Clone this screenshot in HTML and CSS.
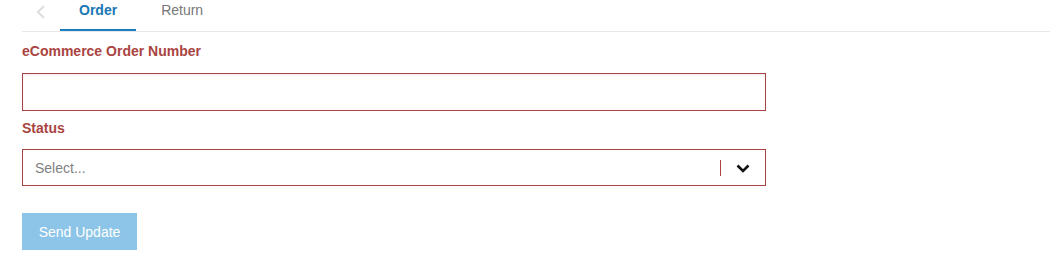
FILE: index.html
```html
<!DOCTYPE html>
<html lang="en">
<head>
    <meta charset="UTF-8">
    <title>Order Update</title>
    <link rel="stylesheet" href="styles.css">
</head>
<body>

<div class="update-panel">
    <nav class="tabs">
        <button class="tab-back" aria-label="Back">
            <svg width="10" height="16" viewBox="0 0 10 16"><path d="M8 2 L2 8 L8 14" fill="none" stroke="#ddd" stroke-width="2"/></svg>
        </button>
        <a class="tab active" href="#">Order</a>
        <a class="tab" href="#">Return</a>
    </nav>

    <form class="update-form">
        <label class="field-label" for="order-number">eCommerce Order Number</label>
        <input id="order-number" class="text-input" type="text">

        <label class="field-label status-label">Status</label>
        <div class="select-box">
            <span class="select-placeholder">Select...</span>
            <span class="select-sep"></span>
            <span class="select-arrow">
                <svg width="14" height="9" viewBox="0 0 14 9"><path d="M1.5 1.5 L7 7 L12.5 1.5" fill="none" stroke="#111" stroke-width="2.6"/></svg>
            </span>
        </div>

        <button class="send-btn" type="button" disabled>Send Update</button>
    </form>
</div>

</body>
</html>
```

FILE: styles.css
```css
body {
    font-family: "Liberation Sans", Arial, sans-serif;
    background: #fff;
    margin: 0;
    padding: 0;
}

.tabs {
    display: flex;
    align-items: flex-start;
    margin-left: 22px;
    height: 31px;
    border-bottom: 1px solid #e8e8e8;
}

.tab-back {
    background: none;
    border: none;
    padding: 0;
    width: 38px;
    height: 29px;
    display: flex;
    align-items: flex-start;
    padding-top: 4px;
    padding-left: 14px;
    box-sizing: border-box;
}

.tab {
    font-size: 14px;
    line-height: 20px;
    padding: 0 19px 9px;
    color: #777;
    text-decoration: none;
    margin-right: 6px;
}

.tab.active {
    color: #1a78b5;
    font-weight: bold;
    border-bottom: 2px solid #1a7fc1;
}

.update-form {
    padding-left: 22px;
    width: 744px;
    display: flex;
    flex-direction: column;
    align-items: flex-start;
}

.field-label {
    font-size: 14px;
    font-weight: bold;
    line-height: 18px;
    color: #a94442;
    margin-top: 10px;
    margin-bottom: 13px;
}

.status-label {
    margin-top: 8px;
    margin-bottom: 12px;
}

.text-input {
    width: 100%;
    height: 38px;
    box-sizing: border-box;
    border: 1px solid #a94442;
    box-shadow: inset 0 1px 2px rgba(0, 0, 0, 0.09);
    margin: 0;
    outline: none;
}

.select-box {
    width: 100%;
    height: 37px;
    box-sizing: border-box;
    border: 1px solid #a94442;
    display: flex;
    align-items: center;
}

.select-placeholder {
    flex: 1;
    padding-left: 12px;
    font-size: 14px;
    color: #808080;
}

.select-sep {
    width: 1px;
    height: 16px;
    background: #a94442;
}

.select-arrow {
    width: 44px;
    display: flex;
    justify-content: center;
    padding-top: 1px;
}

.send-btn {
    margin-top: 27px;
    width: 115px;
    height: 37px;
    background: #8dc5e8;
    border: none;
    color: #fff;
    font-family: "Liberation Sans", Arial, sans-serif;
    font-size: 14px;
    padding: 0;
}
```
